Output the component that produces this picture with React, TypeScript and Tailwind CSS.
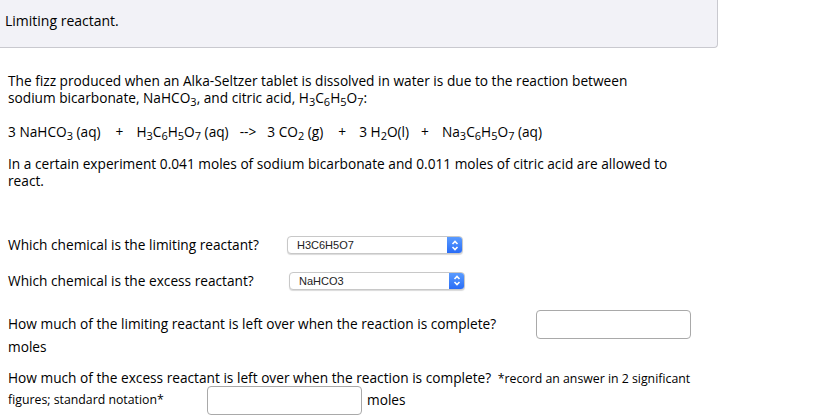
import React from "react";

const font = { fontFamily: "'Open Sans', 'Noto Sans', sans-serif" };

function Sub({ children }: { children: React.ReactNode }) {
  return <sub className="text-[11px]">{children}</sub>;
}

function SelectBox({ value, className = "" }: { value: string; className?: string }) {
  return (
    <div
      className={`flex h-[18px] w-[176px] items-stretch overflow-hidden rounded-[4px] border border-[#c8c8c8] bg-white shadow-[0_1px_1px_rgba(0,0,0,0.15)] ${className}`}
    >
      <div
        className="flex flex-1 items-center pl-[9px] text-[11px] text-[#222]"
        style={{ fontFamily: "'Liberation Sans', Arial, sans-serif" }}
      >
        {value}
      </div>
      <div className="flex w-[15px] items-center justify-center bg-gradient-to-b from-[#5a9bff] to-[#2a6cf6]">
        <svg width="8" height="11" viewBox="0 0 8 11" fill="none" stroke="white" strokeWidth="1.6">
          <path d="M1.5 4 L4 1.5 L6.5 4" />
          <path d="M1.5 7 L4 9.5 L6.5 7" />
        </svg>
      </div>
    </div>
  );
}

function TextInput({ className = "" }: { className?: string }) {
  return (
    <div className={`h-[29px] w-[155px] rounded-[4px] border border-[#a9a9a9] bg-white ${className}`} />
  );
}

export default function App() {
  return (
    <div className="h-[419px] w-[814px] bg-white text-[13.7px] text-black" style={font}>
      {/* Header */}
      <div className="flex h-[48px] w-[718px] items-start rounded-br-[4px] border-b border-r border-[#c9c9cf] bg-[#f2f2f7] pl-[5px] pt-[10px] text-[14px]">
        Limiting reactant.
      </div>

      <div className="px-[8px]">
        <p className="mt-[24px] leading-[17px]">
          The fizz produced when an Alka-Seltzer tablet is dissolved in water is due to the reaction between
          <br />
          sodium bicarbonate, NaHCO<Sub>3</Sub>, and citric acid, H<Sub>3</Sub>C<Sub>6</Sub>H<Sub>5</Sub>O<Sub>7</Sub>:
        </p>

        <div className="mt-[17px] flex leading-[17px]">
          <span>
            3 NaHCO<Sub>3</Sub> (aq)
          </span>
          <span className="ml-[15px]">+</span>
          <span className="ml-[13px]">
            H<Sub>3</Sub>C<Sub>6</Sub>H<Sub>5</Sub>O<Sub>7</Sub> (aq)
          </span>
          <span className="ml-[11px]">--&gt;</span>
          <span className="ml-[11px]">
            3 CO<Sub>2</Sub> (g)
          </span>
          <span className="ml-[15px]">+</span>
          <span className="ml-[13px]">
            3 H<Sub>2</Sub>O(l)
          </span>
          <span className="ml-[12px]">+</span>
          <span className="ml-[13px]">
            Na<Sub>3</Sub>C<Sub>6</Sub>H<Sub>5</Sub>O<Sub>7</Sub> (aq)
          </span>
        </div>

        <p className="mt-[15px] leading-[17px]">
          In a certain experiment 0.041 moles of sodium bicarbonate and 0.011 moles of citric acid are allowed to
          <br />
          react.
        </p>

        <div className="mt-[46px] flex items-center">
          <span className="w-[279px]">Which chemical is the limiting reactant?</span>
          <SelectBox value="H3C6H5O7" />
        </div>

        <div className="mt-[15px] flex items-center">
          <span className="w-[281px]">Which chemical is the excess reactant?</span>
          <SelectBox value="NaHCO3" className="w-[174px]" />
        </div>

        <div className="mt-[19px] flex items-center">
          <span className="w-[528px]">How much of the limiting reactant is left over when the reaction is complete?</span>
          <TextInput />
        </div>
        <div className="mt-[-1px] leading-[17px]">moles</div>

        <div className="mt-[14px] leading-[17px]">
          How much of the excess reactant is left over when the reaction is complete?{" "}
          <span className="ml-[3px] text-[12.3px]">*record an answer in 2 significant</span>
        </div>
        <div className="mt-[-1px] flex items-center">
          <span className="w-[199px] text-[12.3px]">figures; standard notation*</span>
          <TextInput />
          <span className="ml-[5px]">moles</span>
        </div>
      </div>
    </div>
  );
}
